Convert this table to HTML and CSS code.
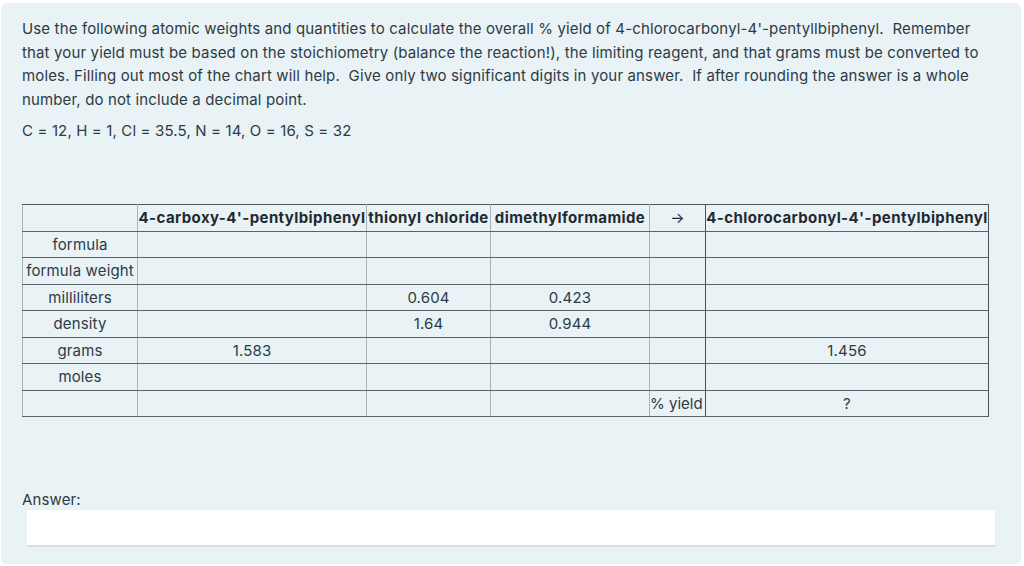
FILE: index.html
```html
<!DOCTYPE html>
<html>
<head>
<meta charset="utf-8">
<link rel="stylesheet" href="styles.css">
</head>
<body>
<div class="card">
  <p class="intro">Use the following atomic weights and quantities to calculate the overall % yield of 4-chlorocarbonyl-4'-pentyllbiphenyl.&nbsp; Remember that your yield must be based on the stoichiometry (balance the reaction!), the limiting reagent, and that grams must be converted to moles. Filling out most of the chart will help.&nbsp; Give only two significant digits in your answer.&nbsp; If after rounding the answer is a whole number, do not include a decimal point.</p>
  <p class="weights">C = 12, H = 1, Cl = 35.5, N = 14, O = 16, S = 32</p>
  <table class="chart">
    <colgroup>
      <col class="c1"><col class="c2"><col class="c3"><col class="c4"><col class="c5"><col class="c6">
    </colgroup>
    <tr class="head"><th></th><th>4-carboxy-4'-pentylbiphenyl</th><th>thionyl chloride</th><th>dimethylformamide</th><th class="dark arrow">&rarr;</th><th class="dark">4-chlorocarbonyl-4'-pentylbiphenyl</th></tr>
    <tr class="lt"><td>formula</td><td></td><td></td><td></td><td class="dark"></td><td class="dark"></td></tr>
    <tr><td>formula weight</td><td></td><td></td><td></td><td class="dark"></td><td class="dark"></td></tr>
    <tr><td>milliliters</td><td></td><td>0.604</td><td>0.423</td><td class="dark"></td><td class="dark"></td></tr>
    <tr class="lt"><td>density</td><td></td><td>1.64</td><td>0.944</td><td class="dark"></td><td class="dark"></td></tr>
    <tr><td>grams</td><td>1.583</td><td></td><td></td><td class="dark"></td><td class="dark">1.456</td></tr>
    <tr class="lt"><td>moles</td><td></td><td></td><td></td><td class="dark"></td><td class="dark"></td></tr>
    <tr><td></td><td></td><td></td><td></td><td class="dark yield">% yield</td><td class="dark">?</td></tr>
  </table>
  <div class="answer-label">Answer:</div>
  <div class="answer-box"></div>
</div>
</body>
</html>
```

FILE: styles.css
```css
html, body {
  margin: 0;
  padding: 0;
  background: #ffffff;
}
body {
  font-family: Inter, "Liberation Sans", sans-serif;
  color: #2d3b45;
}
.card {
  margin: 3px 3px 2px 1px;
  height: 561px;
  box-sizing: border-box;
  background: #e9f2f5;
  border-radius: 5px;
  padding: 14px 21px 0 21px;
}
.intro {
  margin: 0;
  font-size: 15px;
  line-height: 23.5px;
  letter-spacing: 0.14px;
}
.weights {
  margin: 8px 0 0 0;
  font-size: 15px;
  line-height: 23.5px;
  letter-spacing: 0.14px;
}
.chart {
  margin-top: 61px;
  border-collapse: collapse;
  table-layout: fixed;
  width: 966px;
  font-size: 15px;
  letter-spacing: 0.15px;
  color: #2d3b45;
  border: 1px solid #7f8a90;
}
.c1 { width: 115px; }
.c2 { width: 229px; }
.c3 { width: 124px; }
.c4 { width: 159px; }
.c5 { width: 56px; }
.c6 { width: 283px; }
.chart th, .chart td {
  border: 1px solid #5c6368;
  border-top-color: #505659;
  border-left-color: #a9b2b7;
  border-right-color: #a9b2b7;
  padding: 0;
  height: 25.5px;
  text-align: center;
  white-space: nowrap;
  overflow: hidden;
}
.chart tr.lt td {
  border-top-color: #a7afb3;
}
.chart th {
  font-weight: 700;
  color: #1f2a30;
  height: 26px;
  letter-spacing: 0.4px;
}
.chart th.arrow {
  font-weight: 400;
  letter-spacing: 0;
}
.chart .dark {
  border-left-color: #4b5256;
  border-right-color: #4b5256;
}
.chart .yield {
  text-align: left;
  letter-spacing: 0;
}
.answer-label {
  margin-top: 73px;
  font-size: 15px;
  line-height: 20px;
  letter-spacing: 0.14px;
}
.answer-box {
  margin: 0 0 0 5px;
  width: 968px;
  height: 35px;
  background: #ffffff;
  border-bottom: 2px solid #dadde0;
}
```
